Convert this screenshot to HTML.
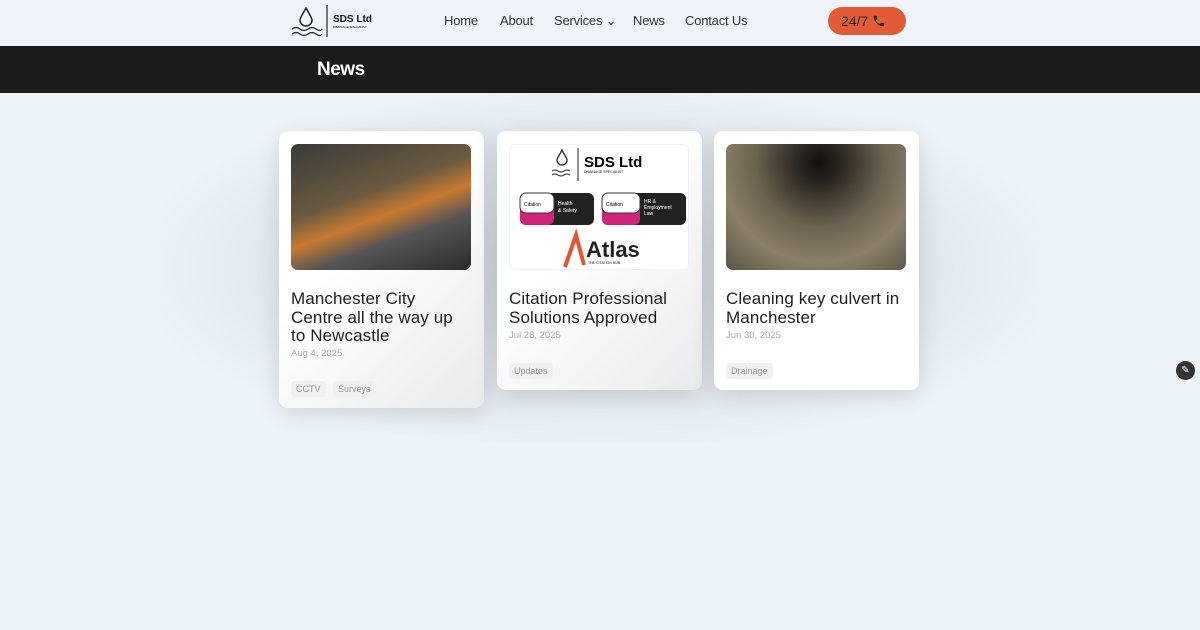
<!DOCTYPE html>
<html><head><style>
*{margin:0;padding:0;box-sizing:border-box}
body{width:1200px;height:630px;background:#ecf3f9;font-family:"Liberation Sans",sans-serif;position:relative;overflow:hidden}
.hdr{position:absolute;top:0;left:0;width:1200px;height:46px;background:#eef4f9}
.nav a{position:absolute;top:13px;font-size:13px;color:#333;text-decoration:none;letter-spacing:-0.2px}
.btn{position:absolute;left:828px;top:7px;width:78px;height:28px;border-radius:14px;background:#e45a34;color:#222;font-size:14px;padding:6px 0 0 13px}
.bar{position:absolute;top:46px;left:0;width:1200px;height:47px;background:#1b1b1b}
.bar span{position:absolute;left:317px;top:13px;color:#fff;font-size:19px;font-weight:bold;letter-spacing:-0.5px}
.glow{position:absolute;left:160px;top:93px;width:880px;height:350px;background:radial-gradient(ellipse at center,#c9d0d6 0%,#dfe6ec 50%,#ecf3f9 75%)}
.card{position:absolute;top:131px;width:205px;border-radius:9px;background:linear-gradient(135deg,#fff 40%,#e9eaeb 100%);box-shadow:0 6px 24px rgba(0,0,0,.12)}
.img{position:absolute;left:12px;top:13px;width:180px;height:126px;border-radius:7px;overflow:hidden}
.t{position:absolute;left:12px;top:159px;width:172px;font-size:17px;line-height:18.5px;color:#1e1e1e;letter-spacing:0.1px}
.d{position:absolute;left:12px;font-size:9.5px;color:#aaa}
.tag{position:absolute;font-size:9px;color:#999;background:#f0f0f0;border-radius:4px;padding:3px 5px}
</style></head><body>
<div class="hdr">
<svg style="position:absolute;left:290px;top:5px" width="90" height="34"><path d="M16 3 C12 10 10 13 10 15 a6 6 0 0 0 12 0 C22 13 20 10 16 3Z" fill="none" stroke="#222" stroke-width="1.5"/><path d="M2 24q4-3 8 0t8 0t8 0t6 0M2 29q4-3 8 0t8 0t8 0t6 0" fill="none" stroke="#222" stroke-width="1.3"/><line x1="37" y1="0" x2="37" y2="32" stroke="#222" stroke-width="1.2"/><text x="43" y="17" font-size="10" font-weight="bold" fill="#111" font-family="Liberation Sans">SDS Ltd</text><text x="43" y="23" font-size="3" fill="#111" font-family="Liberation Sans">DRAINAGE SPECIALIST</text></svg>
<div class="nav"><a style="left:444px">Home</a><a style="left:500px">About</a><a style="left:554px">Services ⌄</a><a style="left:633px">News</a><a style="left:685px">Contact Us</a></div>
<div class="btn">24/7 <svg width="14" height="14" viewBox="0 0 24 24" style="vertical-align:-2px"><path d="M6.6 10.8c1.4 2.8 3.8 5.1 6.6 6.6l2.2-2.2c.3-.3.7-.4 1-.2 1.1.4 2.3.6 3.6.6.6 0 1 .4 1 1V20c0 .6-.4 1-1 1C10.6 21 3 13.4 3 4c0-.6.4-1 1-1h3.5c.6 0 1 .4 1 1 0 1.3.2 2.5.6 3.6.1.3 0 .7-.2 1z" fill="#222"/></svg></div>
</div>
<div class="bar"><span>News</span></div>
<div class="glow"></div>
<div class="card" style="left:279px;height:277px">
<div class="img" style="background:linear-gradient(160deg,#3a3a3a 0%,#6a5a40 40%,#c87a30 55%,#555 70%,#2b2b2b 100%)"></div>
<div class="t">Manchester City Centre all the way up to Newcastle</div>
<div class="d" style="top:217px">Aug 4, 2025</div>
<div class="tag" style="left:12px;top:250px">CCTV</div><div class="tag" style="left:54px;top:250px">Surveys</div>
</div>
<div class="card" style="left:497px;height:259px">
<div class="img" style="background:#fff;border:1px solid #f0f0f0">
<svg width="180" height="126"><path d="M52 5 C49 11 47 13 47 15 a5 5 0 0 0 10 0 C57 13 55 11 52 5Z" fill="none" stroke="#222" stroke-width="1.3"/><path d="M42 26q3-2 6 0t6 0t6 0M42 30q3-2 6 0t6 0t6 0" fill="none" stroke="#222"/><line x1="68" y1="3" x2="68" y2="36" stroke="#222"/><text x="74" y="22" font-size="15" font-weight="bold" font-family="Liberation Sans">SDS Ltd</text><text x="74" y="28" font-size="3.5" font-family="Liberation Sans">DRAINAGE SPECIALIST</text>
<rect x="10" y="48" width="74" height="32" rx="6" fill="#222"/><rect x="10" y="48" width="34" height="32" rx="6" fill="#d2237a"/><rect x="10" y="48" width="34" height="20" rx="6" fill="#fff" stroke="#333"/><text x="14" y="61" font-size="5">Citation</text><text x="48" y="60" font-size="5" fill="#fff">Health</text><text x="48" y="67" font-size="5" fill="#fff">&amp; Safety</text>
<rect x="92" y="48" width="84" height="32" rx="6" fill="#222"/><rect x="92" y="48" width="38" height="32" rx="6" fill="#d2237a"/><rect x="92" y="48" width="38" height="20" rx="6" fill="#fff" stroke="#333"/><text x="96" y="61" font-size="5">Citation</text><text x="134" y="58" font-size="5" fill="#fff">HR &amp;</text><text x="134" y="64" font-size="5" fill="#fff">Employment</text><text x="134" y="70" font-size="5" fill="#fff">Law</text>
<path d="M55 122 L66 90 L74 120" fill="none" stroke="#e8532e" stroke-width="4"/><text x="76" y="112" font-size="22" font-weight="bold" fill="#222" font-family="Liberation Sans">Atlas</text><text x="78" y="119" font-size="3.5">THE CITATION HUB</text></svg></div>
<div class="t">Citation Professional Solutions Approved</div>
<div class="d" style="top:199px">Jul 28, 2025</div>
<div class="tag" style="left:12px;top:232px">Updates</div>
</div>
<div class="card" style="left:714px;height:259px;background:#fff">
<div class="img" style="background:radial-gradient(circle at 52% 15%,#111 0%,#2a2620 15%,#6b6250 45%,#8a8068 70%,#5a5345 100%)"></div>
<div class="t" style="width:190px">Cleaning key culvert in Manchester</div>
<div class="d" style="top:199px">Jun 30, 2025</div>
<div class="tag" style="left:12px;top:232px">Drainage</div>
</div>
<div style="position:absolute;left:1176px;top:361px;width:19px;height:19px;border-radius:50%;background:#333;color:#fff;font-size:10px;text-align:center;line-height:19px">✎</div>
</body></html>
